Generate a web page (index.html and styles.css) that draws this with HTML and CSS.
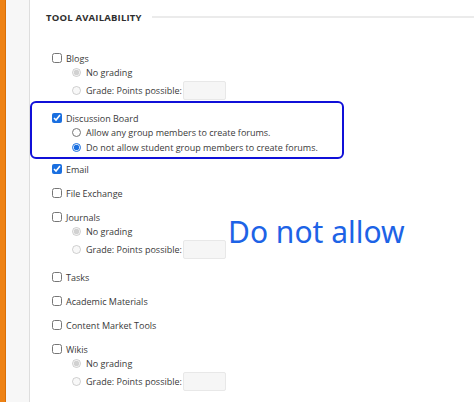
FILE: index.html
```html
<!DOCTYPE html>
<html lang="en">
<head>
    <meta charset="UTF-8">
    <meta name="viewport" content="width=device-width, initial-scale=1.0">
    <title>Tool Availability</title>
    <link rel="stylesheet" href="styles.css">
</head>
<body>
    <div class="page">
        <div class="accent"></div>
        <div class="gutter"></div>
        <div class="content">
            <h2 class="section-title"><span>Tool Availability</span></h2>

            <div class="tools">
                <div class="tool">
                    <label class="tool-label"><input type="checkbox"> Blogs</label>
                    <div class="options">
                        <label class="option"><input type="radio" name="blogs" checked disabled> No grading</label>
                        <label class="option grade-row"><input type="radio" name="blogs" disabled> Grade: Points possible: <span class="points"></span></label>
                    </div>
                </div>

                <div class="highlight">
                    <div class="tool">
                        <label class="tool-label"><input type="checkbox" checked> Discussion Board</label>
                        <div class="options">
                            <label class="option"><input type="radio" name="forums"> Allow any group members to create forums.</label>
                            <label class="option"><input type="radio" name="forums" checked> Do not allow student group members to create forums.</label>
                        </div>
                    </div>
                </div>

                <div class="tool">
                    <label class="tool-label"><input type="checkbox" checked> Email</label>
                </div>
                <div class="tool">
                    <label class="tool-label"><input type="checkbox"> File Exchange</label>
                </div>
                <div class="tool">
                    <label class="tool-label"><input type="checkbox"> Journals</label>
                    <div class="options">
                        <label class="option"><input type="radio" name="journals" checked disabled> No grading</label>
                        <label class="option grade-row"><input type="radio" name="journals" disabled> Grade: Points possible: <span class="points"></span></label>
                    </div>
                </div>
                <div class="tool">
                    <label class="tool-label"><input type="checkbox"> Tasks</label>
                </div>
                <div class="tool">
                    <label class="tool-label"><input type="checkbox"> Academic Materials</label>
                </div>
                <div class="tool">
                    <label class="tool-label"><input type="checkbox"> Content Market Tools</label>
                </div>
                <div class="tool">
                    <label class="tool-label"><input type="checkbox"> Wikis</label>
                    <div class="options">
                        <label class="option"><input type="radio" name="wikis" checked disabled> No grading</label>
                        <label class="option grade-row"><input type="radio" name="wikis" disabled> Grade: Points possible: <span class="points"></span></label>
                    </div>
                </div>
            </div>

            <div class="callout">Do not allow</div>
        </div>
    </div>
</body>
</html>
```

FILE: styles.css
```css
body {
    margin: 0;
    font-family: "Open Sans", "Noto Sans", sans-serif;
    font-size: 9px;
    color: #3a3a3a;
    background: #fff;
}
.page {
    display: flex;
    min-height: 402px;
}
.accent {
    width: 6px;
    background-color: #ee8214;
    border-right: 1px solid #d96f08;
    box-sizing: border-box;
}
.gutter {
    width: 23px;
    background-color: #f7f7f7;
    border-right: 1px solid #dedede;
}
.content {
    flex: 1;
    position: relative;
    padding-left: 16px;
}
.section-title {
    display: flex;
    align-items: center;
    margin: 10px 0 0;
    height: 14px;
    font-size: 9.5px;
    font-weight: bold;
    letter-spacing: 0.2px;
    text-transform: uppercase;
    color: #2e2e2e;
}
.section-title::after {
    content: "";
    flex: 1;
    height: 2px;
    margin-left: 10px;
    background-color: #ebebeb;
}
.tools {
    padding-left: 6px;
    margin-top: 27px;
}
.tool {
    margin-bottom: 10px;
}
.tool-label, .option {
    display: flex;
    align-items: center;
    white-space: nowrap;
}
.tool-label {
    height: 14px;
}
.option {
    height: 15px;
}
.options {
    padding-left: 20px;
}
.options:has(.grade-row) {
    padding-bottom: 2px;
}
.grade-row {
    height: 18px;
    margin-top: 1px;
}
input[type="checkbox"] {
    width: 10px;
    height: 10px;
    margin: 0 4px 0 0;
    accent-color: #1a6fe0;
}
input[type="radio"] {
    width: 9px;
    height: 9px;
    margin: 0 5px 0 0;
    accent-color: #1a6fe0;
}
.points {
    display: inline-block;
    width: 41px;
    height: 17px;
    margin-left: 1px;
    background-color: #f6f6f6;
    border: 1px solid #e8e8e8;
    border-radius: 2px;
}
.highlight {
    width: 314px;
    box-sizing: border-box;
    margin: -10px 0 3px -22px;
    padding: 8px 0 2px 20px;
    border: 2px solid #1010d8;
    border-radius: 6px;
}
.highlight .tool {
    margin-bottom: 0;
}
.callout {
    position: absolute;
    left: 198px;
    top: 211px;
    font-size: 30px;
    color: #1d63e6;
    font-family: "Noto Sans", "Open Sans", sans-serif;
}
```
